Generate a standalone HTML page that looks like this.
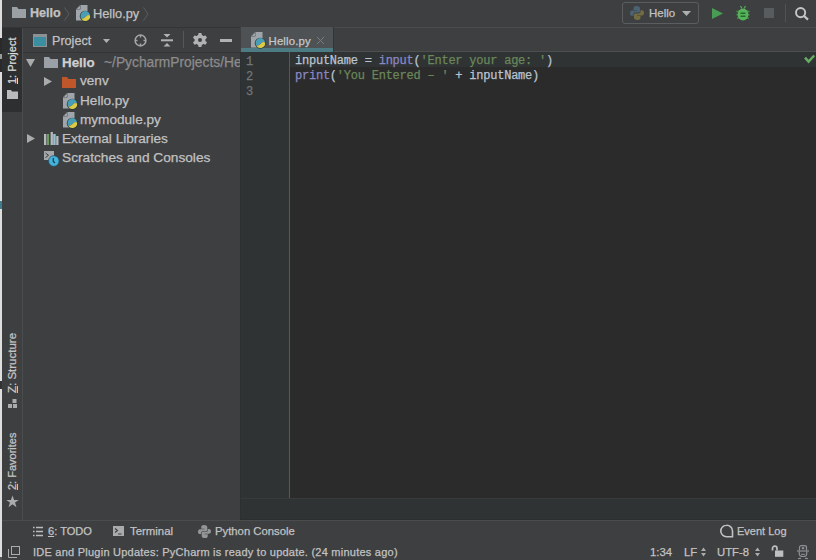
<!DOCTYPE html>
<html><head><meta charset="utf-8">
<style>
*{margin:0;padding:0;box-sizing:border-box}
html,body{width:816px;height:560px;overflow:hidden;background:#3e3f41;font-family:"Liberation Sans",sans-serif;color:#c2c2c2}
.a{position:absolute}
.t{position:absolute;white-space:nowrap;line-height:1;-webkit-text-stroke:0.25px currentColor}
svg{position:absolute;overflow:visible}
.mono{font-family:"Liberation Mono",monospace}
</style></head><body>

<!-- left white edge -->
<div class="a" style="left:0;top:0;width:2px;height:560px;background:#dedede"></div>
<div class="a" style="left:0;top:38px;width:2px;height:34px;background:#2a2a2a"></div><div class="a" style="left:0;top:54px;width:2px;height:5px;background:#9a9a9a"></div><div class="a" style="left:0;top:201px;width:2px;height:8px;background:#3f7d8c"></div><div class="a" style="left:0;top:381px;width:2px;height:8px;background:#333"></div><div class="a" style="left:0;top:557px;width:2px;height:3px;background:#555"></div>

<!-- top nav bar -->
<div class="a" style="left:2px;top:0;width:814px;height:27px;background:#3e3f41"></div><div class="a" style="left:2px;top:27px;width:238px;height:1px;background:#333537"></div>
<!-- folder icon -->
<svg style="left:12px;top:7px" width="14" height="11" viewBox="0 0 14 11"><path d="M0 0H5L6.5 2H14V11H0Z" fill="#9ba0a5"/></svg>
<div class="t" style="left:30px;top:7px;font-size:12.6px;font-weight:bold;color:#c2c2c2">Hello</div>
<svg style="left:64px;top:7px" width="6" height="14" viewBox="0 0 6 14"><path d="M0.5 0.5L5 7L0.5 13.5" fill="none" stroke="#5a5d60" stroke-width="1"/></svg>
<!-- py icon -->
<svg width="0" height="0" style="position:absolute"><defs><symbol id="pyic" viewBox="0 0 16 17">
 <path d="M4.2 0H11.5V15.5H0V4.2Z" fill="#9fa5aa"/><path d="M0.4 4.2L4.2 0.4V4.2Z" fill="#c2c6ca" stroke="#505458" stroke-width="0.7"/>
 <circle cx="9.3" cy="11.2" r="5.5" fill="#263a36"/>
 <path d="M4.5 11.2A4.8 4.8 0 0 1 14.1 10.6Q12 9.2 10 11.5Q8 13.8 5.3 13.8Q4.5 12.5 4.5 11.2Z" fill="#4a9db6"/>
 <path d="M14.1 10.6A4.8 4.8 0 0 1 5.3 13.8Q8 13.8 10 11.5Q12 9.2 14.1 10.6Z" fill="#dcca48"/>
</symbol></defs></svg>
<svg style="left:76px;top:5px" width="16" height="17" viewBox="0 0 16 17"><use href="#pyic"/></svg>
<div class="t" style="left:93px;top:8px;font-size:12.8px;color:#c2c2c2">Hello.py</div>
<svg style="left:143px;top:7px" width="6" height="14" viewBox="0 0 6 14"><path d="M0.5 0.5L5 7L0.5 13.5" fill="none" stroke="#5a5d60" stroke-width="1"/></svg>

<!-- run config combo -->
<div class="a" style="left:622px;top:2px;width:77px;height:22px;border:1px solid #5b5e60;border-radius:3px"></div>
<svg style="left:630px;top:6px;opacity:.45" width="14" height="14" viewBox="0 0 14 14">
 <path d="M6.5 0C4 0 3.5 1 3.5 2.5V4H7V4.6H2C0.8 4.6 0 5.6 0 7.2C0 8.8 0.8 9.8 2 9.8H3.5V8.2C3.5 7.2 4.3 6.6 5.3 6.6H8.5C9.5 6.6 10 6 10 5V2.5C10 1 9 0 6.5 0Z" fill="#5a8fae"/>
 <path d="M7.5 14C10 14 10.5 13 10.5 11.5V10H7V9.4H12C13.2 9.4 14 8.4 14 6.8C14 5.2 13.2 4.2 12 4.2H10.5V5.8C10.5 6.8 9.7 7.4 8.7 7.4H5.5C4.5 7.4 4 8 4 9V11.5C4 13 5 14 7.5 14Z" fill="#b5a447"/>
</svg>
<div class="t" style="left:649px;top:8px;font-size:11.5px;color:#c2c2c2">Hello</div>
<svg style="left:682px;top:11px" width="9" height="5" viewBox="0 0 9 5"><path d="M0 0H9L4.5 5Z" fill="#aeb0b2"/></svg>
<!-- run -->
<svg style="left:712px;top:8px" width="11" height="11" viewBox="0 0 11 11"><path d="M0 0L11 5.5L0 11Z" fill="#499c54"/></svg>
<!-- debug -->
<svg style="left:736px;top:5px" width="14" height="16" viewBox="0 0 14 16">
 <path d="M4.5 1L6 3.5M9.5 1L8 3.5" stroke="#5aa660" stroke-width="1.3"/>
 <path d="M0.5 6.5H13.5M0.5 9.8H13.5M1 13H13" stroke="#3f8f45" stroke-width="1.5"/>
 <ellipse cx="7" cy="9.6" rx="5.4" ry="6" fill="#57b25c"/>
 <path d="M4.5 8.2H9.5M4.5 11.2H9.5" stroke="#236b2a" stroke-width="1.4"/>
</svg>
<!-- stop -->
<div class="a" style="left:764px;top:8px;width:10px;height:10px;background:#595c5e"></div>
<div class="a" style="left:785px;top:4px;width:1px;height:18px;background:#505254"></div>
<!-- search -->
<svg style="left:795px;top:7px" width="14" height="13" viewBox="0 0 14 13"><circle cx="5.6" cy="5.6" r="4.6" fill="none" stroke="#c4c6c8" stroke-width="1.9"/><path d="M8.8 8.8L13 12.6" stroke="#c4c6c8" stroke-width="2.2"/></svg>

<!-- left tool strip -->
<div class="a" style="left:2px;top:28px;width:20px;height:492px;background:#3e3f41"></div>
<div class="a" style="left:22px;top:28px;width:1px;height:492px;background:#4a4c4e"></div>
<div class="a" style="left:2px;top:28px;width:20px;height:84px;background:#2d2f30"></div>
<div class="t" style="left:7px;top:84px;font-size:11px;color:#dadada;transform:rotate(-90deg);transform-origin:0 0;"><u>1</u>: Project</div>
<svg style="left:7px;top:90px" width="11" height="9" viewBox="0 0 11 9"><path d="M0 0H4L5 1.5H11V9H0Z" fill="#b9bbbd"/></svg>

<div class="t" style="left:7px;top:393px;font-size:11.5px;color:#c4c4c4;transform:rotate(-90deg);transform-origin:0 0;"><u>Z</u>: Structure</div>
<svg style="left:8px;top:399px" width="9" height="9" viewBox="0 0 9 9"><rect x="4.5" y="0" width="4" height="4" fill="#a9abad"/><rect x="0" y="5" width="4" height="4" fill="#a9abad"/><rect x="5" y="5" width="4" height="4" fill="#a9abad"/></svg>

<div class="t" style="left:7px;top:490px;font-size:11px;color:#c4c4c4;transform:rotate(-90deg);transform-origin:0 0;"><u>2</u>: Favorites</div>
<svg style="left:6px;top:495px" width="13" height="13" viewBox="0 0 24 24"><path d="M12 1L15 9H23.5L16.7 14L19.3 22.5L12 17.3L4.7 22.5L7.3 14L0.5 9H9Z" fill="#a9abad"/></svg>

<!-- project panel header -->
<div class="a" style="left:23px;top:28px;width:217px;height:24px;background:#3e3f41"></div><div class="a" style="left:23px;top:52px;width:217px;height:1px;background:#333537"></div>
<svg style="left:33px;top:34px" width="14" height="13" viewBox="0 0 14 13"><rect x="0.5" y="0.5" width="13" height="12" fill="#3b8da2" stroke="#8d9194"/><rect x="1" y="1" width="12" height="2" fill="#8d9194"/></svg>
<div class="t" style="left:52px;top:35px;font-size:12.6px;color:#c2c2c2">Project</div>
<svg style="left:103px;top:39px" width="7" height="4" viewBox="0 0 7 4"><path d="M0 0H7L3.5 4Z" fill="#aeb0b2"/></svg>
<!-- locate -->
<svg style="left:134px;top:34px" width="13" height="13" viewBox="0 0 13 13"><circle cx="6.5" cy="6.5" r="5.4" fill="none" stroke="#a4a6a8" stroke-width="1.5"/><path d="M6.5 1V3.5M6.5 9.5V12M1 6.5H3.5M9.5 6.5H12" stroke="#a4a6a8" stroke-width="1.5"/></svg>
<!-- collapse -->
<svg style="left:161px;top:34px" width="12" height="13" viewBox="0 0 12 13"><path d="M0 6.3H12" stroke="#b0b2b4" stroke-width="2"/><path d="M2.5 0H9.5L6 3.5ZM2.5 12.5H9.5L6 9Z" fill="#b0b2b4"/></svg>
<div class="a" style="left:183px;top:31px;width:1px;height:17px;background:#55585a"></div>
<!-- gear -->
<svg style="left:193px;top:33px" width="14" height="14" viewBox="0 0 14 14"><path d="M5.6 0H8.4L8.8 2.1L10.6 3.1L12.6 2.4L14 4.8L12.4 6.2V8L14 9.3L12.6 11.7L10.6 11L8.8 12L8.4 14H5.6L5.2 12L3.4 11L1.4 11.7L0 9.3L1.6 8V6.2L0 4.8L1.4 2.4L3.4 3.1L5.2 2.1Z" fill="#b0b2b4"/><circle cx="7" cy="7" r="2" fill="#3c3f41"/></svg>
<div class="a" style="left:220px;top:39px;width:12px;height:2.5px;background:#b0b2b4"></div>

<!-- project tree -->
<svg style="left:26px;top:59px" width="9" height="8" viewBox="0 0 9 8"><path d="M0 0H9L4.5 8Z" fill="#a9abad"/></svg>
<svg style="left:44px;top:57px" width="14" height="11" viewBox="0 0 14 11"><path d="M0 0H5L6.5 2H14V11H0Z" fill="#9aa0a6"/></svg>
<div class="t" style="left:62px;top:56px;font-size:13.4px;font-weight:bold;color:#cfcfcf">Hello</div>
<div class="t" style="left:104px;top:56px;font-size:13.8px;color:#8c8c8c">~/PycharmProjects/Hello</div>

<svg style="left:44px;top:77px" width="9" height="9" viewBox="0 0 9 9"><path d="M0 0V9L8 4.5Z" fill="#a9abad"/></svg>
<svg style="left:62px;top:77px" width="14" height="11" viewBox="0 0 14 11"><path d="M0 0H5L6.5 2H14V11H0Z" fill="#c0572a"/></svg>
<div class="t" style="left:80px;top:74px;font-size:13.6px;color:#c2c2c2">venv</div>

<svg style="left:63px;top:93px" width="16" height="17" viewBox="0 0 16 17"><use href="#pyic"/></svg>
<div class="t" style="left:80px;top:94px;font-size:13.6px;color:#c2c2c2">Hello.py</div>
<svg style="left:63px;top:112px" width="16" height="17" viewBox="0 0 16 17"><use href="#pyic"/></svg>
<div class="t" style="left:80px;top:113px;font-size:13.6px;color:#c2c2c2">mymodule.py</div>

<svg style="left:27px;top:134px" width="8" height="9" viewBox="0 0 8 9"><path d="M0 0V9L8 4.5Z" fill="#a9abad"/></svg>
<svg style="left:44px;top:132px" width="15" height="13" viewBox="0 0 15 13"><rect x="0" y="2" width="2.3" height="11" fill="#b6babc"/><rect x="2.8" y="2" width="2.3" height="11" fill="#6c9d60"/><rect x="6.6" y="0" width="2.3" height="13" fill="#b6babc"/><rect x="9.2" y="2" width="2.5" height="11" fill="#8fc3d2"/><rect x="12.2" y="4" width="2.3" height="9" fill="#b6babc"/></svg>
<div class="t" style="left:62px;top:132px;font-size:13.6px;color:#c2c2c2">External Libraries</div>

<svg style="left:44px;top:151px" width="16" height="16" viewBox="0 0 16 16"><rect x="0" y="0" width="10" height="9" fill="#a3a7aa"/><path d="M1.5 2L4.5 4.3L1.5 6.6" fill="none" stroke="#3c3f41" stroke-width="1"/><circle cx="9.8" cy="10" r="5.3" fill="#43b3dc" stroke="#24526a" stroke-width="0.8"/><path d="M9.3 7V10.5L11 12" fill="none" stroke="#1f4054" stroke-width="1.3"/></svg>
<div class="t" style="left:62px;top:151px;font-size:13.7px;color:#c2c2c2">Scratches and Consoles</div>

<!-- panel right border -->
<div class="a" style="left:240px;top:52px;width:1px;height:468px;background:#2d3032"></div>

<!-- editor tab row -->
<div class="a" style="left:241px;top:27px;width:575px;height:24px;background:#3e3f41"></div><div class="a" style="left:334px;top:27px;width:482px;height:1px;background:#4a4c4e"></div>
<div class="a" style="left:241px;top:51px;width:575px;height:1px;background:#4c4e50"></div>
<div class="a" style="left:241px;top:27px;width:92px;height:25px;background:#4e5254"></div>
<div class="a" style="left:241px;top:48px;width:92px;height:4px;background:#4c7b83"></div>
<div class="a" style="left:333px;top:27px;width:1px;height:25px;background:#323436"></div>
<svg style="left:251px;top:32px" width="16" height="17" viewBox="0 0 16 17"><use href="#pyic"/></svg>
<div class="t" style="left:268.5px;top:36px;font-size:11.4px;letter-spacing:0.15px;color:#c8c8c8">Hello.py</div>
<svg style="left:317px;top:37px" width="7" height="7" viewBox="0 0 7 7"><path d="M0 0L7 7M7 0L0 7" stroke="#7a7d80" stroke-width="1"/></svg>

<!-- editor -->
<div class="a" style="left:241px;top:52px;width:48px;height:446px;background:#2f3334"></div>
<div class="a" style="left:289px;top:52px;width:1px;height:446px;background:#555759"></div>
<div class="a" style="left:290px;top:52px;width:526px;height:446px;background:#2b2b2b"></div>
<div class="a" style="left:290px;top:52px;width:526px;height:15px;background:#2f3334"></div>
<div class="t mono" style="left:246px;top:54.5px;font-size:12px;color:#737679;line-height:15.1px">1<br>2<br>3</div>
<div class="t mono" style="left:295px;top:54px;font-size:12px;letter-spacing:-0.23px;line-height:15px;color:#b9c4d0;white-space:pre">inputName = <span style="color:#8888c6">input</span>(<span style="color:#6a8759">'Enter your age: '</span>)
<span style="color:#8888c6">print</span>(<span style="color:#6a8759">'You Entered – '</span> + inputName)
</div>
<svg style="left:804px;top:54px" width="11" height="10" viewBox="0 0 11 10"><path d="M1 3.6L4.6 7.6L10.2 1.5" fill="none" stroke="#66ad62" stroke-width="2.4"/></svg>

<!-- breadcrumb bar -->
<div class="a" style="left:241px;top:498px;width:575px;height:22px;background:#2f3334;border-top:1px solid #383b3c;border-bottom:1px solid #2c2f30"></div>

<!-- bottom tool bar -->
<div class="a" style="left:2px;top:520px;width:814px;height:1px;background:#4a4c4e"></div>
<svg style="left:33px;top:527px" width="10" height="9" viewBox="0 0 10 9"><path d="M0 0.5H1.6M0 4.5H1.6M0 8.5H1.6M3 0.5H10M3 4.5H10M3 8.5H10" stroke="#b9bbbd" stroke-width="1.4"/></svg>
<div class="t" style="left:48px;top:526px;font-size:11.1px;color:#c2c2c2"><u>6</u>: TODO</div>
<svg style="left:113px;top:526px" width="11" height="10" viewBox="0 0 11 10"><rect width="11" height="10" fill="#a9abad"/><path d="M2 2.5L4.5 4.5L2 6.5M5 8H8.5" fill="none" stroke="#3c3f41" stroke-width="1.1"/></svg>
<div class="t" style="left:130px;top:526px;font-size:11.4px;color:#c2c2c2">Terminal</div>
<svg style="left:198px;top:525px;opacity:.8" width="13" height="13" viewBox="0 0 14 14">
 <path d="M6.5 0C4 0 3.5 1 3.5 2.5V4H7V4.6H2C0.8 4.6 0 5.6 0 7.2C0 8.8 0.8 9.8 2 9.8H3.5V8.2C3.5 7.2 4.3 6.6 5.3 6.6H8.5C9.5 6.6 10 6 10 5V2.5C10 1 9 0 6.5 0Z" fill="#a9abad"/>
 <path d="M7.5 14C10 14 10.5 13 10.5 11.5V10H7V9.4H12C13.2 9.4 14 8.4 14 6.8C14 5.2 13.2 4.2 12 4.2H10.5V5.8C10.5 6.8 9.7 7.4 8.7 7.4H5.5C4.5 7.4 4 8 4 9V11.5C4 13 5 14 7.5 14Z" fill="#a9abad"/>
</svg>
<div class="t" style="left:215px;top:526px;font-size:11.3px;color:#c2c2c2">Python Console</div>

<svg style="left:719px;top:524px" width="15" height="14" viewBox="0 0 15 14"><path d="M7.5 1.3A5.7 5.7 0 1 0 7.5 12.7H13.5V7A5.7 5.7 0 0 0 7.5 1.3Z" fill="none" stroke="#c0c2c4" stroke-width="1.6"/></svg>
<div class="t" style="left:737px;top:526px;font-size:11px;color:#c2c2c2">Event Log</div>

<!-- status bar -->
<svg style="left:8px;top:546px" width="12" height="12" viewBox="0 0 12 12"><rect x="3.5" y="0.5" width="8" height="8" fill="none" stroke="#a9abad"/><path d="M0.5 3V11.5H9" fill="none" stroke="#a9abad"/></svg>
<div class="t" style="left:33px;top:547px;font-size:11px;letter-spacing:0.24px;color:#c2c2c2">IDE and Plugin Updates: PyCharm is ready to update. (24 minutes ago)</div>
<div class="t" style="left:650px;top:547px;font-size:11.3px;color:#c2c2c2">1:34</div>
<div class="t" style="left:684px;top:547px;font-size:11.3px;color:#c2c2c2">LF</div>
<svg style="left:701px;top:547px" width="5" height="10" viewBox="0 0 5 10"><path d="M0 4L2.5 0.5L5 4ZM0 6L2.5 9.5L5 6Z" fill="#a9abad"/></svg>
<div class="t" style="left:717px;top:547px;font-size:11.3px;color:#c2c2c2">UTF-8</div>
<svg style="left:755px;top:547px" width="5" height="10" viewBox="0 0 5 10"><path d="M0 4L2.5 0.5L5 4ZM0 6L2.5 9.5L5 6Z" fill="#a9abad"/></svg>
<svg style="left:771px;top:545px" width="13" height="12" viewBox="0 0 13 12"><path d="M1.5 5.5V3.5C1.5 2 2.5 1.2 3.8 1.2C5.1 1.2 6 2 6 3.5V5.5" fill="none" stroke="#bdbfc1" stroke-width="1.7"/><rect x="4" y="5.5" width="8.3" height="6.3" fill="#bdbfc1"/></svg>
<svg style="left:797px;top:545px" width="12" height="14" viewBox="0 0 12 14"><path d="M2.5 5.5V2.5C2.5 1.3 3.3 0.7 4.5 0.7H7.5C8.7 0.7 9.5 1.3 9.5 2.5V5.5" fill="none" stroke="#8f9295" stroke-width="1.2"/><rect x="4.8" y="2.2" width="2.4" height="2" fill="#8f9295"/><path d="M0 6H12" stroke="#8f9295" stroke-width="1.2"/><path d="M2.3 6.5V9C2.3 10.5 3.5 11.5 6 11.5C8.5 11.5 9.7 10.5 9.7 9V6.5" fill="none" stroke="#8f9295" stroke-width="1.2"/><path d="M4 9.3H8" stroke="#8f9295" stroke-width="1"/><path d="M3 12.5L2 14M9 12.5L10 14M1 13.6H4M8 13.6H11" stroke="#8f9295" stroke-width="1"/></svg>

</body></html>
